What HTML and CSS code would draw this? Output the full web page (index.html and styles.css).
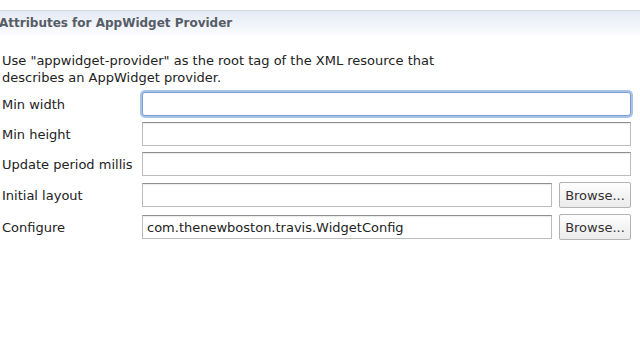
FILE: index.html
```html
<!DOCTYPE html>
<html lang="en">
<head>
    <meta charset="UTF-8">
    <meta name="viewport" content="width=device-width, initial-scale=1.0">
    <title>Attributes for AppWidget Provider</title>
    <link rel="stylesheet" href="styles.css">
</head>
<body>
    <div class="section">
        <div class="section-header">Attributes for AppWidget Provider</div>
        <p class="description">Use "appwidget-provider" as the root tag of the XML resource that<br>describes an AppWidget provider.</p>

        <div class="form">
            <label class="field-label" for="minWidth">Min width</label>
            <input class="field-input wide focused" type="text" id="minWidth">

            <label class="field-label" for="minHeight">Min height</label>
            <input class="field-input wide" type="text" id="minHeight">

            <label class="field-label" for="updatePeriod">Update period millis</label>
            <input class="field-input wide" type="text" id="updatePeriod">

            <label class="field-label" for="initialLayout">Initial layout</label>
            <input class="field-input" type="text" id="initialLayout">
            <button class="browse">Browse...</button>

            <label class="field-label" for="configure">Configure</label>
            <input class="field-input" type="text" id="configure" value="com.thenewboston.travis.WidgetConfig">
            <button class="browse">Browse...</button>
        </div>
    </div>
</body>
</html>
```
FILE: styles.css
```css
body {
    margin: 0;
    background-color: #ffffff;
    font-family: "DejaVu Sans", Arial, sans-serif;
    font-size: 13px;
    color: #222222;
}
.section {
    padding-top: 10px;
}
.section-header {
    height: 24px;
    line-height: 24px;
    border-top: 1px solid #d6dce5;
    background: linear-gradient(to bottom, #e4eaf4, #fbfcfe);
    font-weight: bold;
    font-size: 12px;
    color: #575d66;
    text-indent: -1px;
}
.description {
    margin: 17px 0 0 0;
    padding-left: 2px;
    line-height: 17px;
}
.form {
    display: grid;
    grid-template-columns: 142px 1fr 79px;
    row-gap: 6px;
    align-items: center;
    margin-top: 6px;
    padding-right: 9px;
}
.field-label {
    padding-left: 2px;
    white-space: nowrap;
}
.field-input {
    box-sizing: border-box;
    height: 24px;
    margin: 0;
    padding: 0 4px;
    border: 1px solid #bcbcbc;
    border-top-color: #8f8f8f;
    background-color: #ffffff;
    box-shadow: inset 0 1px 1px rgba(0, 0, 0, 0.08);
    font-family: "DejaVu Sans", Arial, sans-serif;
    font-size: 13px;
    color: #222222;
    outline: none;
}
.field-input.wide {
    grid-column: 2 / 4;
}
.field-input.focused {
    border: 1px solid #7c9fd3;
    border-radius: 3px;
    box-shadow: 0 0 0 2px #a8c3e8;
}
.browse {
    box-sizing: border-box;
    height: 26px;
    margin: 0 0 0 7px;
    padding: 0;
    border: 1px solid #b3b3b3;
    border-radius: 2px;
    background: linear-gradient(to bottom, #fefefe, #ebebeb);
    font-family: "DejaVu Sans", Arial, sans-serif;
    font-size: 13px;
    color: #333333;
}
```
